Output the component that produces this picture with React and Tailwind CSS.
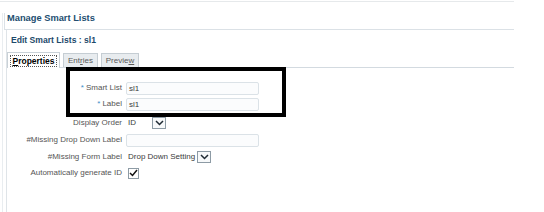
import React from "react";

const Chevron = ({ className = "" }) => (
  <span className={"flex h-[12px] w-[14px] items-center justify-center border border-[#8d9ba5] bg-[#f7f9fa] " + className}>
    <svg width="9" height="6" viewBox="0 0 9 6">
      <polyline points="1,1 4.5,4.5 8,1" fill="none" stroke="#1f2a33" strokeWidth="1.5" />
    </svg>
  </span>
);

const Row = ({ label, required, className = "", children }) => (
  <div className={"flex h-[14px] items-center " + className}>
    <div className="w-[116px] pr-[1px] text-right text-[8px] leading-[14px] text-[#555] whitespace-nowrap">
      {required && <span className="mr-[2px] text-[#3f8fc9]">*</span>}
      {label}
    </div>
    <div className="ml-[3px] flex items-center">{children}</div>
  </div>
);

const TextBox = ({ value = "" }) => (
  <div className="h-[13px] w-[133px] rounded-[2px] border border-[#dbe2e7] bg-[#fbfcfd] pl-[2px] text-[8px] leading-[11px] text-[#3a3a3a]">
    {value}
  </div>
);

export default function App() {
  return (
    <div className="relative h-[212px] w-[544px] overflow-hidden bg-white font-['Liberation_Sans',Arial,sans-serif]">
      <div className="h-[2px] w-[514px] border-b border-[#e6e9eb]" />
      <div className="mt-[11px] ml-[2px] h-[199px] w-[512px] border-l border-[#e9edf0]">
        <div className="ml-[1px] h-[17px] border-b border-l border-[#dbe1e6] pl-[2px] text-[9.3px] font-bold leading-[11px] text-[#234e70]">
          Manage Smart Lists
        </div>
        <div className="ml-[3px] h-[182px] border-l border-[#dfe4e8]">
          <div className="pt-[5px] pl-[4px] text-[8.6px] font-bold leading-[11px] text-[#1d4a6b]">
            Edit Smart Lists : sl1
          </div>
          <div className="mt-[6px] flex h-[16px] items-end gap-[3px] border-b border-[#d3dae0]">
            <div className="-mb-[1px] flex h-[16px] w-[53px] items-center justify-center border border-b-0 border-[#c9d1d7] bg-white">
              <span className="border border-dotted border-[#555] px-[1px] text-[8.5px] font-bold leading-[10px] text-black">
                <span className="underline">P</span>roperties
              </span>
            </div>
            <div className="flex h-[14px] w-[35px] items-center justify-center border border-b-0 border-[#c5cdd3] bg-[#e8ecef] text-[8px] text-[#5a5a5a]">
              Ent<span className="underline">r</span>ies
            </div>
            <div className="flex h-[14px] w-[38px] items-center justify-center border border-b-0 border-[#c5cdd3] bg-[#e8ecef] text-[8px] text-[#5a5a5a]">
              Previe<span className="underline">w</span>
            </div>
          </div>
          <div className="pt-[13px]">
            <Row label="Smart List" required>
              <TextBox value="sl1" />
            </Row>
            <Row label="Label" required className="mt-[2px]">
              <TextBox value="sl1" />
            </Row>
            <Row label="Display Order" className="mt-[5px]">
              <span className="ml-[2px] w-[24px] text-[8px] leading-[12px] text-[#3a3a3a]">ID</span>
              <Chevron />
            </Row>
            <Row label="#Missing Drop Down Label" className="mt-[3px]">
              <TextBox />
            </Row>
            <Row label="#Missing Form Label" className="mt-[3px]">
              <span className="ml-[2px] mr-[2px] text-[8px] leading-[12px] text-[#3a3a3a]">Drop Down Setting</span>
              <Chevron />
            </Row>
            <Row label="Automatically generate ID" className="mt-[2px]">
              <span className="ml-[2px] flex h-[11px] w-[11px] items-center justify-center border border-[#8d9ba5] bg-white">
                <svg width="9" height="8" viewBox="0 0 9 8">
                  <polyline points="1,4 3.5,6.5 8,1" fill="none" stroke="#111" strokeWidth="1.5" />
                </svg>
              </span>
            </Row>
          </div>
        </div>
      </div>
      <div className="absolute left-[66px] top-[67px] h-[50px] w-[220px] border-4 border-black" />
    </div>
  );
}
